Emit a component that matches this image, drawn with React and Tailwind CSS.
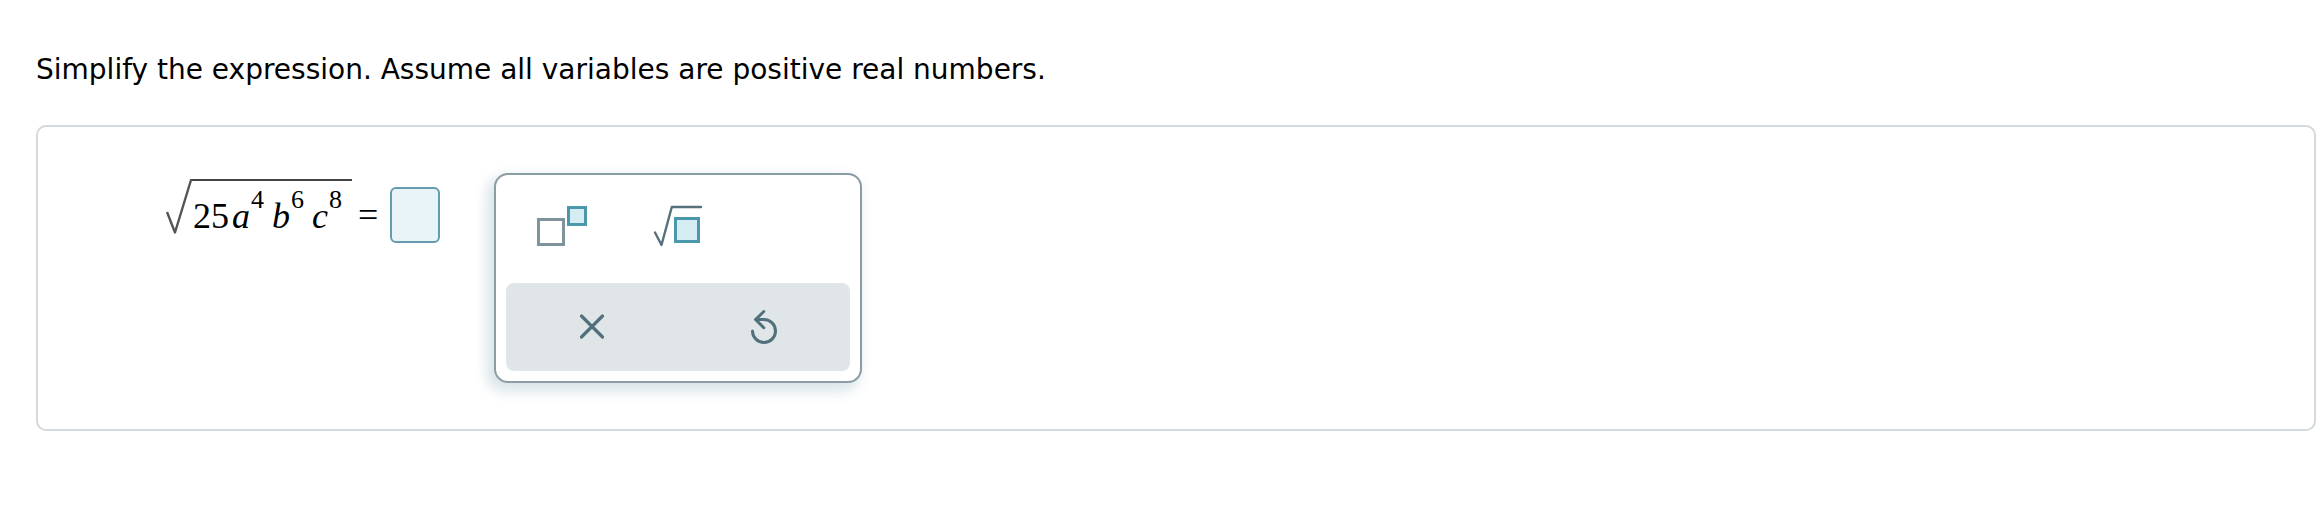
import { useState } from 'react';

const factors = [
  { base: 'a', power: '4' },
  { base: 'b', power: '6' },
  { base: 'c', power: '8' },
];

const ExponentIcon = () => (
  <svg width="52" height="42" viewBox="0 0 52 42" fill="none" strokeWidth="3" aria-hidden="true">
    <rect x="2.5" y="14.5" width="25" height="25" stroke="#7f939c" />
    <rect x="32.5" y="2.5" width="17" height="17" fill="#d5edf2" stroke="#4b97ac" />
  </svg>
);

const RootIcon = () => (
  <svg width="50" height="42" viewBox="0 0 50 42" fill="none" aria-hidden="true">
    <path
      d="M2 27.5 L8.5 40 L18.8 2 H48"
      stroke="#56707c"
      strokeWidth="2.4"
      strokeLinecap="round"
      strokeLinejoin="round"
    />
    <rect x="22.5" y="13.5" width="23" height="23" fill="#d5edf2" stroke="#4b97ac" strokeWidth="3" />
  </svg>
);

const ClearIcon = () => (
  <svg width="28" height="28" viewBox="0 0 28 28" fill="none" aria-hidden="true">
    <path d="M3.5 3 L24.5 24 M24.5 3 L3.5 24" stroke="#50707c" strokeWidth="3.2" strokeLinecap="round" />
  </svg>
);

const ResetIcon = () => (
  <svg width="28" height="36" viewBox="0 0 28 36" fill="none" aria-hidden="true">
    <path
      d="M2.5 22 A11.5 11.5 0 1 0 14 10.5 H5.5 M13.8 2.5 L5.5 10.5 L13.8 18.7"
      stroke="#50707c"
      strokeWidth="3"
      strokeLinecap="round"
      strokeLinejoin="round"
    />
  </svg>
);

const Radical = ({ children }) => (
  <div className="flex items-start">
    <svg width="26" height="56" viewBox="0 0 26 56" fill="none" aria-hidden="true">
      <path d="M1 33 L9 53.5 L25 1 H26" stroke="#555" strokeWidth="2.4" strokeLinejoin="round" />
    </svg>
    <div className="flex items-baseline border-t-2 border-[#444] pt-[15px] pr-2.5 pl-px leading-10">{children}</div>
  </div>
);

const Keypad = ({ onInsert, onClear, onReset }) => (
  <div className="w-[368px] rounded-[14px] border-2 border-[#8a9da5] bg-white p-2.5 shadow-[-5px_6px_14px_2px_#d9e3e7]">
    <div className="mb-4 grid h-[82px] grid-cols-3">
      <button type="button" aria-label="Exponent" className="flex items-center justify-center pr-1" onClick={() => onInsert('^')}>
        <ExponentIcon />
      </button>
      <button type="button" aria-label="Square root" className="flex items-center justify-center" onClick={() => onInsert('√')}>
        <RootIcon />
      </button>
    </div>
    <div className="grid h-[88px] grid-cols-2 rounded-lg bg-[#e0e6e8]">
      <button type="button" aria-label="Clear" className="flex items-center justify-center" onClick={onClear}>
        <ClearIcon />
      </button>
      <button type="button" aria-label="Start over" className="flex items-center justify-center" onClick={onReset}>
        <ResetIcon />
      </button>
    </div>
  </div>
);

const App = () => {
  const [answer, setAnswer] = useState('');

  return (
    <main className="bg-white pt-[50px] pr-2 pb-20 pl-9 text-black">
      <p className="font-['DejaVu_Sans',sans-serif] text-[28px] leading-10">
        Simplify the expression. Assume all variables are positive real numbers.
      </p>

      <section className="mt-[35px] flex flex-wrap items-start gap-[54px] rounded-[10px] border-2 border-[#d3d9dc] py-[46px] pr-8 pl-32">
        <div className="flex items-start pt-1.5 font-['Liberation_Serif',serif] text-[36px]">
          <Radical>
            <span className="mr-[3px]">25</span>
            <span className="flex items-baseline gap-2">
              {factors.map(({ base, power }) => (
                <span key={base}>
                  <i>{base}</i>
                  <sup className="relative -top-5 ml-px align-baseline text-[26px] leading-none">{power}</sup>
                </span>
              ))}
            </span>
          </Radical>
          <label htmlFor="answer" className="mr-3 ml-1.5 pt-4 leading-10">
            =
          </label>
          <input
            id="answer"
            type="text"
            value={answer}
            onChange={(e) => setAnswer(e.target.value)}
            className="mt-2 h-14 w-[50px] rounded-md border-2 border-[#659bab] bg-[#e9f4f9] text-center outline-none"
          />
        </div>

        <Keypad
          onInsert={(symbol) => setAnswer((prev) => prev + symbol)}
          onClear={() => setAnswer('')}
          onReset={() => setAnswer('')}
        />
      </section>
    </main>
  );
};

export default App;
